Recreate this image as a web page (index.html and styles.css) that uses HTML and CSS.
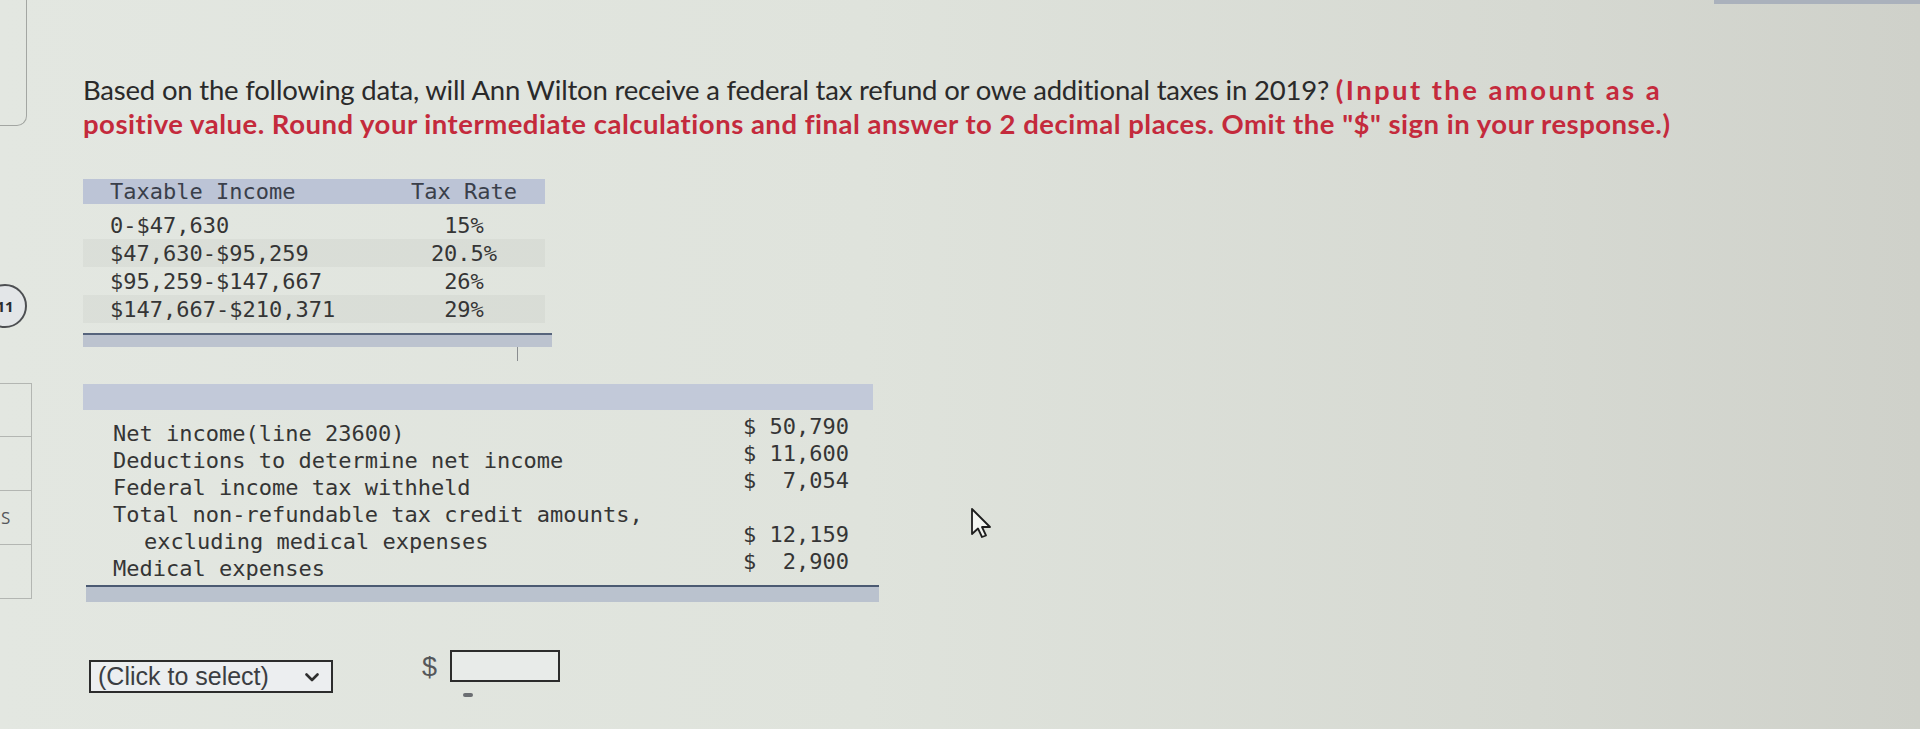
FILE: index.html
```html
<!DOCTYPE html>
<html lang="en">
<head>
<meta charset="utf-8">
<title>Tax question</title>
<link rel="stylesheet" href="styles.css">
</head>
<body>
<div class="page">
  <aside class="sidebar">
    <div class="side-box-top"></div>
    <div class="side-circle"><span>11</span></div>
    <div class="side-list">
      <div class="side-item"></div>
      <div class="side-item"></div>
      <div class="side-item"><span>S</span></div>
      <div class="side-item"></div>
    </div>
  </aside>
  <main class="main">
    <div class="topstrip"><div class="topstrip-bar"></div></div>
    <p class="question">Based on the following data, will Ann Wilton receive a federal tax refund or owe additional taxes in 2019? <strong class="hint"><span class="hint-first">(Input the amount as a</span><br>positive value. Round your intermediate calculations and final answer to 2 decimal places. Omit the "$" sign in your response.)</strong></p>

    <div class="rates">
      <div class="rates-head">
        <span class="col-income">Taxable Income</span>
        <span class="col-rate">Tax Rate</span>
      </div>
      <div class="rates-body">
        <div class="rate-row"><span class="col-income">0-$47,630</span><span class="col-rate">15%</span></div>
        <div class="rate-row alt"><span class="col-income">$47,630-$95,259</span><span class="col-rate">20.5%</span></div>
        <div class="rate-row"><span class="col-income">$95,259-$147,667</span><span class="col-rate">26%</span></div>
        <div class="rate-row alt"><span class="col-income">$147,667-$210,371</span><span class="col-rate">29%</span></div>
      </div>
      <div class="rates-foot"></div>
      <div class="rates-tick"></div>
    </div>

    <div class="data">
      <div class="data-head"></div>
      <div class="data-body">
        <div class="data-labels">
          <div>Net income(line 23600)</div>
          <div>Deductions to determine net income</div>
          <div>Federal income tax withheld</div>
          <div>Total non-refundable tax credit amounts,</div>
          <div class="indent">excluding medical expenses</div>
          <div>Medical expenses</div>
        </div>
        <div class="data-values">
          <div class="val">$ 50,790</div>
          <div class="val">$ 11,600</div>
          <div class="val">$  7,054</div>
          <div class="val">&nbsp;</div>
          <div class="val">$ 12,159</div>
          <div class="val">$  2,900</div>
        </div>
      </div>
      <div class="data-foot"></div>
    </div>

    <div class="answer">
      <div class="select">
        <span>(Click to select)</span>
        <svg class="chevron" width="14" height="9" viewBox="0 0 14 9"><path d="M1.5 1.5 L7 7 L12.5 1.5" fill="none" stroke="#2f2f2f" stroke-width="2.6" stroke-linecap="round" stroke-linejoin="round"/></svg>
      </div>
      <span class="dollar">$</span>
      <div class="input-wrap">
        <div class="input"></div>
        <div class="blob"></div>
      </div>
    </div>
  </main>
</div>
<svg class="cursor" width="34" height="34" viewBox="0 0 34 34"><path d="M3 2 L3 27 L9 21.5 L13 30 L17 28.5 L13 20 L21 20 Z" fill="#f4f6f2" stroke="#1e1e1e" stroke-width="1.8" stroke-linejoin="round"/></svg>
</body>
</html>
```

FILE: styles.css
```css
* { box-sizing: border-box; }

html, body {
  margin: 0;
  padding: 0;
}

body {
  width: 1920px;
  height: 729px;
  overflow: hidden;
  background: linear-gradient(90deg, #e3e7e1 0%, #dfe3dc 45%, #d6d9d2 80%, #cfd1ca 100%);
  font-family: "Lato", "Open Sans", sans-serif;
  color: #2b2b2b;
  position: relative;
}

.page {
  display: flex;
  height: 729px;
}

/* left navigation fragment */
.sidebar {
  width: 32px;
  flex: 0 0 32px;
  display: flex;
  flex-direction: column;
  overflow: visible;
}

.side-box-top {
  width: 37px;
  height: 126px;
  margin-left: -10px;
  border: 1px solid #a3a6a2;
  border-top: none;
  border-radius: 0 0 10px 0;
}

.side-circle {
  width: 44px;
  height: 44px;
  margin-top: 158px;
  margin-left: -17px;
  border: 2px solid #4d4f52;
  border-radius: 50%;
  background: #e3e6e8;
  display: flex;
  align-items: center;
  justify-content: center;
  font-family: "Open Sans", sans-serif;
  font-weight: 700;
  font-size: 15px;
  color: #2a2c30;
}

.side-list {
  margin-top: 55px;
  display: flex;
  flex-direction: column;
}

.side-item {
  width: 42px;
  height: 54px;
  margin-left: -10px;
  border: 1px solid #b3b6b2;
  border-top: none;
  display: flex;
  align-items: center;
  padding-left: 10px;
  font-family: "Open Sans", sans-serif;
  font-size: 17px;
  color: #55585c;
}

.side-item:first-child { border-top: 1px solid #b3b6b2; }

/* main column */
.main {
  flex: 1;
  display: flex;
  flex-direction: column;
  padding-left: 51px;
}

.topstrip {
  height: 4px;
  display: flex;
  justify-content: flex-end;
}

.topstrip-bar {
  width: 206px;
  height: 4px;
  background: #aab1bc;
}

.question {
  margin: 69px 0 0 0;
  font-size: 27.5px;
  line-height: 34px;
  color: #2a2a2a;
  white-space: nowrap;
  letter-spacing: -0.2px;
}

.hint {
  color: #c42a3c;
  font-weight: 700;
  letter-spacing: 0.5px;
}

.hint-first {
  letter-spacing: 2.4px;
}

/* tax rate table */
.rates {
  margin-top: 38px;
  display: flex;
  flex-direction: column;
  font-family: "DejaVu Sans Mono", monospace;
  font-size: 22px;
  color: #353535;
}

.rates-head,
.rate-row {
  display: grid;
  grid-template-columns: 300px 162px;
  width: 462px;
  align-items: center;
}

.rates-head {
  height: 25px;
  background: #bcc4d6;
  color: #3a3f4a;
}

.rates-body {
  padding-top: 7px;
}

.rate-row {
  height: 28px;
}

.rate-row.alt {
  background: rgba(120, 125, 120, 0.07);
}

.col-income { padding-left: 27px; }
.col-rate { text-align: center; }

.rates-foot {
  margin-top: 10px;
  width: 469px;
  height: 14px;
  background: #bcc3cf;
  border-top: 2px solid #56647c;
}

.rates-tick {
  margin-left: 434px;
  width: 1px;
  height: 14px;
  background: #8a8d90;
}

/* data table */
.data {
  margin-top: 23px;
  display: flex;
  flex-direction: column;
  font-family: "DejaVu Sans Mono", monospace;
  font-size: 22px;
  color: #353535;
}

.data-head {
  width: 790px;
  height: 26px;
  background: #c2c9d9;
}

.data-body {
  width: 790px;
  display: flex;
  line-height: 27px;
}

.data-labels {
  padding-left: 30px;
  padding-top: 10px;
}

.data-labels .indent { padding-left: 31px; }

.data-values {
  margin-left: auto;
  padding-right: 24px;
  padding-top: 3px;
}

.val { white-space: pre; }

.data-foot {
  margin-top: 3px;
  margin-left: 3px;
  width: 793px;
  height: 17px;
  background: #bac2ce;
  border-top: 2px solid #4b5a72;
}

/* answer row */
.answer {
  margin-top: 48px;
  display: flex;
  align-items: flex-start;
}

.select {
  margin-left: 6px;
  margin-top: 10px;
  width: 244px;
  height: 33px;
  border: 2px solid #2c2c2c;
  background: #eceef0;
  display: flex;
  align-items: center;
  justify-content: space-between;
  padding: 0 12px 0 7px;
  font-family: "Liberation Sans", Arial, sans-serif;
  font-size: 25px;
  color: #3b3d42;
}

.chevron { margin-top: 2px; }

.dollar {
  margin-left: 89px;
  margin-top: 2px;
  font-family: "Liberation Sans", Arial, sans-serif;
  font-size: 27px;
  color: #55575a;
}

.input-wrap {
  margin-left: 13px;
  display: flex;
  flex-direction: column;
}

.input {
  width: 110px;
  height: 32px;
  border: 2px solid #2c2c2c;
  background: #e8ebe9;
}

.blob {
  margin-top: 11px;
  margin-left: 13px;
  width: 10px;
  height: 4px;
  border-radius: 2px;
  background: #6b6e72;
}

/* mouse pointer overlay */
.cursor {
  position: absolute;
  left: 969px;
  top: 507px;
}
```
